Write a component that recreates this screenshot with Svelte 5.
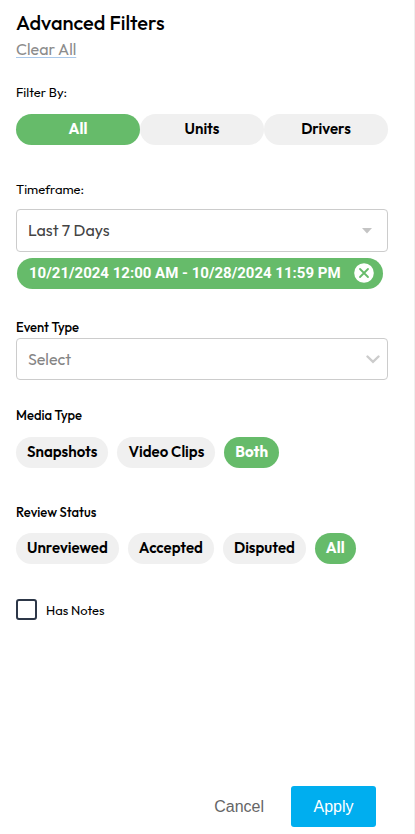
<script lang="ts">
  const targets = ['All', 'Units', 'Drivers'];
  const timeframes = ['Last 7 Days', 'Last 14 Days', 'Last 30 Days'];
  const eventTypes = ['Speeding', 'Harsh Braking', 'Distracted Driving'];
  const mediaTypes = ['Snapshots', 'Video Clips', 'Both'];
  const statuses = ['Unreviewed', 'Accepted', 'Disputed', 'All'];

  let target = $state('All');
  let timeframe = $state('Last 7 Days');
  let range = $state('10/21/2024 12:00 AM - 10/28/2024 11:59 PM');
  let eventType = $state('');
  let media = $state('Both');
  let status = $state('All');
  let hasNotes = $state(false);

  function clearAll(e: MouseEvent) {
    e.preventDefault();
    target = 'All';
    range = '';
    eventType = '';
    media = 'Both';
    status = 'All';
    hasNotes = false;
  }
</script>

<form class="panel" onsubmit={(e) => e.preventDefault()}>
  <header>
    <h1>Advanced Filters</h1>
    <a class="clear" href="#clear" onclick={clearAll}>Clear All</a>
  </header>

  <section class="group first" aria-labelledby="target-label">
    <span class="label" id="target-label">Filter By:</span>
    <div class="segments">
      {#each targets as name (name)}
        <button type="button" class="pill" class:active={target === name} aria-pressed={target === name} onclick={() => (target = name)}>{name}</button>
      {/each}
    </div>
  </section>

  <section class="group timeframe">
    <label class="label" for="timeframe">Timeframe:</label>
    <div class="select tall">
      <select id="timeframe" bind:value={timeframe}>
        {#each timeframes as name (name)}
          <option value={name}>{name}</option>
        {/each}
      </select>
      <svg class="caret" viewBox="0 0 10 6" aria-hidden="true"><path d="M0 0h10L5 5.5z" /></svg>
    </div>
    {#if range}
      <div class="chip">
        <span>{range}</span>
        <button type="button" class="remove" aria-label="Remove date range" onclick={() => (range = '')}>
          <svg viewBox="0 0 20 20" aria-hidden="true">
            <circle cx="10" cy="10" r="9.8" />
            <path d="M6 6l8 8M14 6l-8 8" />
          </svg>
        </button>
      </div>
    {/if}
  </section>

  <section class="group event">
    <label class="label" for="event-type">Event Type</label>
    <div class="select">
      <select id="event-type" class:empty={!eventType} bind:value={eventType}>
        <option value="">Select</option>
        {#each eventTypes as name (name)}
          <option value={name}>{name}</option>
        {/each}
      </select>
      <svg class="chevron" viewBox="0 0 14 9" aria-hidden="true"><path d="M1.5 1.5L7 6.8L12.5 1.5" /></svg>
    </div>
  </section>

  <section class="group media" aria-labelledby="media-label">
    <span class="label" id="media-label">Media Type</span>
    <div class="pills">
      {#each mediaTypes as name (name)}
        <button type="button" class="pill" class:active={media === name} aria-pressed={media === name} onclick={() => (media = name)}>{name}</button>
      {/each}
    </div>
  </section>

  <section class="group status" aria-labelledby="status-label">
    <span class="label" id="status-label">Review Status</span>
    <div class="pills">
      {#each statuses as name (name)}
        <button type="button" class="pill" class:active={status === name} aria-pressed={status === name} onclick={() => (status = name)}>{name}</button>
      {/each}
    </div>
  </section>

  <label class="notes">
    <input type="checkbox" bind:checked={hasNotes} />
    <span>Has Notes</span>
  </label>

  <footer>
    <button type="button" class="cancel">Cancel</button>
    <button type="submit" class="apply">Apply</button>
  </footer>
</form>

<style>
  :global(body) {
    background: #fff;
  }
  .panel {
    box-sizing: border-box;
    display: flex;
    flex-direction: column;
    min-height: 100vh;
    padding: 9px 26px 7px 16px;
    border-right: 1px solid #efefef;
    font-family: Outfit, Lato, sans-serif;
    color: #000;
  }
  button,
  select {
    font-family: inherit;
    margin: 0;
  }
  button {
    border: 0;
    padding: 0;
    cursor: pointer;
  }
  header {
    display: flex;
    flex-direction: column;
    align-items: flex-start;
    gap: 1px;
  }
  h1 {
    margin: 0;
    font-size: 20px;
    line-height: 28px;
    font-weight: 500;
  }
  .clear {
    font-size: 16px;
    line-height: 22px;
    color: #8c8c8c;
    text-decoration-color: #a9c8ea;
    text-underline-offset: 2px;
  }
  .group {
    display: flex;
    flex-direction: column;
    margin-top: 35px;
  }
  .first {
    margin-top: 23px;
  }
  .event {
    margin-top: 29px;
  }
  .media {
    margin-top: 26px;
  }
  .label {
    margin-bottom: 13px;
    font-size: 13px;
    line-height: 18px;
  }
  .timeframe .label {
    margin-bottom: 11px;
  }
  .event .label {
    margin-bottom: 2px;
  }
  .status .label {
    margin-bottom: 12px;
  }
  .event .label,
  .media .label,
  .status .label {
    font-weight: 500;
  }
  .segments {
    display: grid;
    grid-template-columns: repeat(3, 1fr);
  }
  .pills {
    display: flex;
    flex-wrap: wrap;
    gap: 9px;
  }
  .pill {
    height: 31px;
    padding: 0 11px 2px;
    border-radius: 16px;
    background: #f0f0f0;
    color: #000;
    font-size: 15px;
    font-weight: 600;
  }
  .pill.active {
    background: #66bb6a;
    color: #fff;
    font-weight: 700;
  }
  .select {
    display: flex;
    position: relative;
  }
  select {
    appearance: none;
    box-sizing: border-box;
    width: 100%;
    height: 42px;
    padding: 0 36px 0 11px;
    border: 1px solid #ccc;
    border-radius: 4px;
    background: #fff;
    color: #444;
    font-size: 16px;
  }
  .tall select {
    height: 43px;
    padding-bottom: 2px;
  }
  select.empty {
    color: #858585;
  }
  .caret,
  .chevron {
    position: absolute;
    top: 0;
    bottom: 0;
    margin: auto 0;
    pointer-events: none;
  }
  .caret {
    right: 16px;
    width: 10px;
    height: 6px;
    fill: #c4c4c4;
  }
  .chevron {
    right: 8px;
    width: 14px;
    height: 9px;
    fill: none;
    stroke: #ccc;
    stroke-width: 2.4;
    stroke-linecap: round;
  }
  .chip {
    display: flex;
    box-sizing: border-box;
    align-items: center;
    justify-content: space-between;
    height: 31px;
    margin: 6px 5px 0 1px;
    padding: 0 9px 2px 12px;
    border-radius: 16px;
    background: #66bb6a;
    color: #fff;
    font: 700 15px Roboto, sans-serif;
  }
  .remove {
    display: flex;
    background: none;
  }
  .remove svg {
    width: 20px;
    height: 20px;
  }
  .remove circle {
    fill: #fff;
  }
  .remove path {
    stroke: #66bb6a;
    stroke-width: 1.8;
    stroke-linecap: round;
  }
  .notes {
    display: flex;
    align-items: center;
    align-self: flex-start;
    gap: 9px;
    margin-top: 35px;
    font-size: 13px;
    line-height: 18px;
  }
  .notes input {
    appearance: none;
    box-sizing: border-box;
    width: 21px;
    height: 21px;
    margin: 0;
    border: 2px solid #2d3748;
    border-radius: 3px;
  }
  .notes input:checked {
    background: #2d3748;
  }
  footer {
    display: flex;
    justify-content: flex-end;
    gap: 8px;
    margin-top: auto;
    padding-right: 12px;
  }
  footer button {
    height: 41px;
    border-radius: 3px;
    font: 16px "Liberation Sans", Arial, sans-serif;
  }
  .cancel {
    padding: 0 19px;
    background: none;
    color: #666;
  }
  .apply {
    min-width: 85px;
    padding: 0 22px;
    background: #00aeef;
    color: #fff;
  }
</style>
